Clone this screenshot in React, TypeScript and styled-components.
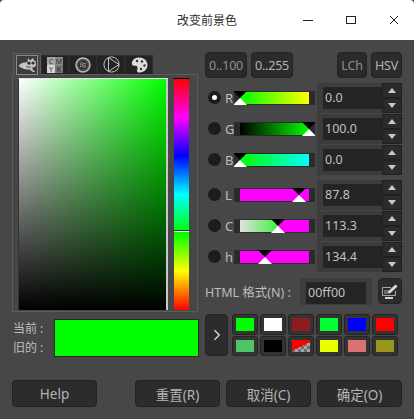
import styled, { createGlobalStyle } from "styled-components";
import { ChevronRight } from "lucide-react";

const Global = createGlobalStyle`
    html, body {
        margin: 0;
        background: #3a3a3a;
    }
`

const Dialog = styled("div")`
    width: 414px;
    height: 419px;
    display: flex;
    flex-direction: column;
    overflow: hidden;
    border-radius: 4px 4px 2px 2px;
    background: #474747;
    color: #bdbdbd;
    font-family: "Noto Sans", "Noto Sans CJK SC", sans-serif;
    font-size: 13px;
`

const TitleBar = styled("div")`
    height: 40px;
    flex: none;
    background: #ffffff;
    color: #2e2e2e;
    position: relative;
    display: flex;
    align-items: center;
    justify-content: center;
    font-size: 12px;
`

const WindowButtons = styled("div")`
    position: absolute;
    top: 0;
    right: 13px;
    height: 40px;
    display: flex;
    align-items: center;
    gap: 29px;
    color: #222;
`

const Main = styled("div")`
    display: grid;
    grid-template-columns: 187px 197px;
    column-gap: 6px;
    padding: 12px 12px 0;
`

const LeftColumn = styled("div")`
    display: flex;
    flex-direction: column;
`

const Tabs = styled("div")`
    display: flex;
    height: 22px;
    padding-left: 1px;
    align-items: flex-end;
`

const Tab = styled("div")<{ $active?: boolean }>`
    width: 28px;
    height: ${p => (p.$active ? "22px" : "19px")};
    box-sizing: border-box;
    display: flex;
    align-items: center;
    justify-content: center;
    background: ${p => (p.$active ? "#474747" : "#232323")};
    border: 1px solid ${p => (p.$active ? "#5c5c5c" : "#2c2c2c")};
    border-bottom: ${p => (p.$active ? "none" : "1px solid #232323")};
    margin-bottom: ${p => (p.$active ? "-1px" : "0")};
    position: relative;
`

const ActiveMark = styled("div")`
    width: 20px;
    height: 18px;
    display: flex;
    align-items: center;
    justify-content: center;
    background: #3c3c3c;
    border: 1px solid #8a8a8a;
`

const Frame = styled("div")`
    width: 186px;
    height: 238px;
    box-sizing: border-box;
    border: 1px solid #5c5c5c;
    padding: 3px 8px 0 5px;
    display: flex;
    justify-content: space-between;
`

const ColorSquare = styled("div")`
    width: 150px;
    height: 232px;
    box-sizing: border-box;
    background:
        linear-gradient(180deg, rgba(0, 0, 0, 0), #000),
        linear-gradient(90deg, #fff, #0f0);
    border-top: 1px solid #e4e4e4;
    border-right: 2px solid #c8c8c8;
    border-left: 1px solid #333;
`

const HueStrip = styled("div")`
    width: 15px;
    height: 232px;
    box-sizing: border-box;
    border-top: 1px solid #000;
    position: relative;
    background: linear-gradient(180deg, #f00, #f0f 16.6%, #00f 33.3%, #0ff 50%, #0f0 66.6%, #ff0 83.3%, #f00);
`

const HueMarker = styled("div")`
    position: absolute;
    left: 0;
    right: 0;
    top: 151px;
    height: 1px;
    background: #d8e8d8;
    border-top: 1px solid #333;
`

const Compare = styled("div")`
    display: grid;
    grid-template-columns: 42px 145px;
    margin-top: 7px;
    height: 38px;
`

const CompareLabels = styled("div")`
    display: flex;
    flex-direction: column;
    justify-content: space-between;
    padding-left: 1px;
    line-height: 19px;
    font-size: 12px;
`

const CompareSwatch = styled("div")`
    box-sizing: border-box;
    background: #00ff00;
    border: 1px solid #2a2a2a;
`

const RightColumn = styled("div")`
    display: flex;
    flex-direction: column;
`

const ModeRow = styled("div")`
    display: flex;
    height: 26px;
    gap: 4px;
`

const Spacer = styled("div")`
    flex: 1;
`

const ModeButton = styled("div")<{ $w: number; $dim?: boolean }>`
    width: ${p => p.$w}px;
    box-sizing: border-box;
    display: flex;
    align-items: center;
    justify-content: center;
    border-radius: 4px;
    background: ${p => (p.$dim ? "#2a2a2a" : "#2c2c2c")};
    border: 1px solid #232323;
    color: ${p => (p.$dim ? "#8f8f8f" : "#b4b4b4")};
    font-size: 12.5px;
    letter-spacing: -0.2px;
`

const Rows = styled("div")<{ $top: number }>`
    display: flex;
    flex-direction: column;
    gap: 1px;
    margin-top: ${p => p.$top}px;
`

const Row = styled("div")`
    display: flex;
    height: 30px;
    align-items: center;
`

const Radio = styled("div")<{ $on?: boolean }>`
    width: 13px;
    height: 13px;
    margin: 0 0 2px 3px;
    flex: none;
    border-radius: 50%;
    background: #1c1c1c;
    display: flex;
    align-items: center;
    justify-content: center;
    &::after {
        content: "";
        display: ${p => (p.$on ? "block" : "none")};
        width: 5px;
        height: 5px;
        border-radius: 50%;
        background: #fff;
    }
`

const RowLabel = styled("div")`
    width: 13px;
    padding-left: 4px;
    box-sizing: border-box;
    flex: none;
    font-size: 13px;
    white-space: nowrap;
`

const Track = styled("div")`
    width: 81px;
    height: 14px;
    flex: none;
    padding: 1px 6px;
    box-sizing: border-box;
    background: #2b2b2b;
    position: relative;
    overflow: hidden;
`

const Fill = styled("div")<{ $fill: string }>`
    height: 12px;
    background: ${p => p.$fill};
`

const ThumbTop = styled("div")`
    position: absolute;
    top: 0;
    width: 0;
    height: 0;
    margin-left: -7px;
    border-left: 7px solid transparent;
    border-right: 7px solid transparent;
    border-top: 7px solid #000;
`

const ThumbBottom = styled("div")`
    position: absolute;
    bottom: 0;
    width: 0;
    height: 0;
    margin-left: -7px;
    border-left: 7px solid transparent;
    border-right: 7px solid transparent;
    border-bottom: 7px solid #fff;
`

const SpinFrame = styled("div")`
    width: 85px;
    height: 30px;
    margin-left: 2px;
    flex: none;
    display: flex;
    background: #3c3c3c;
    padding-left: 6px;
    box-sizing: border-box;
    align-items: center;
`

const SpinEntry = styled("div")`
    width: 59px;
    height: 22px;
    box-sizing: border-box;
    background: #242424;
    padding-left: 2px;
    line-height: 22px;
    font-size: 12.5px;
    color: #c0c0c0;
`

const SpinButtons = styled("div")`
    width: 20px;
    height: 30px;
    display: flex;
    flex-direction: column;
`

const SpinButton = styled("div")<{ $up?: boolean }>`
    height: 15px;
    box-sizing: border-box;
    background: #2b2b2b;
    border: 1px solid #1f1f1f;
    display: flex;
    align-items: center;
    justify-content: center;
    &::after {
        content: "";
        width: 0;
        height: 0;
        border-left: 4px solid transparent;
        border-right: 4px solid transparent;
        ${p => (p.$up ? "border-bottom: 5px solid #c8c8c8;" : "border-top: 5px solid #c8c8c8;")}
    }
`

const HtmlRow = styled("div")`
    display: flex;
    height: 26px;
    margin-top: 6px;
    align-items: center;
`

const HtmlLabel = styled("div")`
    width: 95px;
    font-size: 12.5px;
    white-space: nowrap;
`

const HtmlFrame = styled("div")`
    width: 72px;
    height: 27px;
    box-sizing: border-box;
    background: #3c3c3c;
    padding: 4px 6px 0;
`

const HtmlEntry = styled("div")`
    height: 22px;
    background: #242424;
    padding-left: 2px;
    line-height: 22px;
    font-size: 12.5px;
    color: #c0c0c0;
`

const PickButton = styled("div")`
    width: 24px;
    height: 26px;
    margin-left: 6px;
    box-sizing: border-box;
    border: 1px solid #232323;
    border-radius: 4px;
    background: #2c2c2c;
    display: flex;
    align-items: center;
    justify-content: center;
`

const PaletteRow = styled("div")`
    display: flex;
    margin-top: 10px;
    gap: 4px;
    height: 42px;
`

const ArrowButton = styled("div")`
    width: 23px;
    box-sizing: border-box;
    background: #2c2c2c;
    border: 1px solid #232323;
    border-radius: 4px;
    color: #e0e0e0;
    display: flex;
    align-items: center;
    justify-content: center;
`

const SwatchGrid = styled("div")`
    display: grid;
    grid-template-columns: repeat(6, 26px);
    grid-template-rows: 21px 20px;
    column-gap: 2px;
    row-gap: 1px;
    width: 170px;
`

const Swatch = styled("div")`
    box-sizing: border-box;
    background: #333;
    border: 1px solid #242424;
    border-radius: 3px;
    padding: 3px;
    display: flex;
`

const SwatchFill = styled("div")<{ $fill: string }>`
    flex: 1;
    background: ${p => p.$fill};
`

const Footer = styled("div")`
    display: flex;
    margin-top: auto;
    margin-bottom: 12px;
    padding: 0 12px;
    gap: 6px;
`

const FooterButton = styled("div")<{ $gapRight?: boolean }>`
    width: 85px;
    height: 27px;
    box-sizing: border-box;
    border: 1px solid #222;
    border-radius: 4px;
    background: #2c2c2c;
    display: flex;
    align-items: center;
    justify-content: center;
    font-size: 13.5px;
    color: #b4b4b4;
    margin-right: ${p => (p.$gapRight ? "32px" : "0")};
`

const MinimizeIcon = () => (
    <svg width="14" height="14" viewBox="0 0 14 14" fill="none" stroke="currentColor">
        <path d="M2 7.5 H12" />
    </svg>
)

const MaximizeIcon = () => (
    <svg width="14" height="14" viewBox="0 0 14 14" fill="none" stroke="currentColor">
        <rect x="2.5" y="3.5" width="9" height="7" />
    </svg>
)

const CloseIcon = () => (
    <svg width="14" height="14" viewBox="0 0 14 14" fill="none" stroke="currentColor">
        <path d="M3 3 L11 11 M11 3 L3 11" />
    </svg>
)

const Wilber = () => (
    <svg width="19" height="16" viewBox="0 0 19 16">
        <path d="M0.5 9 C2 6.5 4.5 5.5 7 5.5 L9.5 5 L10 1 L12 3.5 L15 1 L16 3.5 L17.5 4 L18 8 C17.5 10 15.5 10.5 14 10.5 L15 13 L17.5 15 L15 15 L11.5 12.5 C8 12.5 4 12 0.5 9 Z" fill="#c4c4c4" />
        <circle cx="11" cy="6.2" r="1.6" fill="#2e2e2e" />
        <circle cx="15" cy="6" r="1.6" fill="#2e2e2e" />
        <path d="M8 9.5 L13 10.5" stroke="#555" strokeWidth="1" />
    </svg>
)

const Cmyk = () => (
    <svg width="16" height="16" viewBox="0 0 16 16" fontFamily="Noto Sans" fontSize="7" textAnchor="middle">
        <rect width="8" height="8" fill="#a6a6a6" />
        <rect x="8" width="8" height="8" fill="#8a8a8a" />
        <rect y="8" width="8" height="8" fill="#d4d4d4" />
        <rect x="8" y="8" width="8" height="8" fill="#777" />
        <text x="4" y="6.5" fill="#333">C</text>
        <text x="12" y="6.5" fill="#333">M</text>
        <text x="4" y="14.5" fill="#333">Y</text>
        <text x="12" y="14.5" fill="#222">K</text>
    </svg>
)

const WaterIcon = () => (
    <svg width="16" height="16" viewBox="0 0 16 16" fill="none">
        <circle cx="8" cy="8" r="7" fill="#555" stroke="#bcbcbc" strokeWidth="1.4" />
        <circle cx="8" cy="8" r="4.6" fill="#2a2a2a" />
        <path d="M5 6.2 q1.5 -1 3 0 t3 0 M5 8 q1.5 -1 3 0 t3 0 M5 9.8 q1.5 -1 3 0 t3 0" stroke="#bbb" strokeWidth="0.8" />
    </svg>
)

const TriangleIcon = () => (
    <svg width="17" height="17" viewBox="0 0 17 17" fill="none" stroke="#c4c4c4" strokeWidth="1">
        <circle cx="8.5" cy="8.5" r="7.6" />
        <path d="M5.5 1.6 L5.5 15.4 L16 8.5 Z" />
    </svg>
)

const PaletteIcon = () => (
    <svg width="17" height="16" viewBox="0 0 17 16">
        <path d="M7 0.5 C12 0 16.5 3 16.5 8 C16.5 13 12 15.5 8 15.5 C5.5 15.5 6 13 6.5 11.5 C7 9.5 5.5 8.5 3.5 8.8 C1 9 0.5 7 1 5 C1.8 2.5 4 0.8 7 0.5 Z" fill="#dcdcdc" />
        <circle cx="6" cy="4" r="1.2" fill="#333" />
        <circle cx="11" cy="4.5" r="1.2" fill="#333" />
        <circle cx="13.5" cy="8.5" r="1.2" fill="#333" />
        <circle cx="10" cy="12" r="1.2" fill="#333" />
    </svg>
)

const PickerIcon = () => (
    <svg width="18" height="16" viewBox="0 0 18 16" fill="none">
        <path d="M10 4.5 H1.5 V12.5 H14.5 V8" stroke="#a8a8a8" strokeWidth="1" />
        <rect x="3" y="7" width="6" height="4" fill="#6a6a6a" />
        <path d="M4 15 H12" stroke="#d0d0d0" strokeWidth="2" />
        <path d="M7 10 L7.5 8 L14.5 1.5 L16.5 3.5 L9.5 10 Z" fill="#dcdcdc" />
    </svg>
)

const rgbRows = [
    { name: "R", value: "0.0", at: 6, fill: "linear-gradient(90deg, #0f0, #ff0)", on: true },
    { name: "G", value: "100.0", at: 75, fill: "linear-gradient(90deg, #000, #0f0)" },
    { name: "B", value: "0.0", at: 6, fill: "linear-gradient(90deg, #0f0, #0ff)" },
]

const lchRows = [
    { name: "L", value: "87.8", at: 65, fill: "#f0f" },
    { name: "C", value: "113.3", at: 44, fill: "linear-gradient(90deg, #e2e2e2, #3cf03c 56%, #f0f 56%)" },
    { name: "h", value: "134.4", at: 31, fill: "#f0f" },
]

const palette = [
    "#00ff00", "#ffffff", "#8e1c1c", "#00ff33", "#0000ff", "#ff0000",
    "#50c468", "#000000",
    "linear-gradient(153deg, #ff0000 52%, transparent 52%), repeating-conic-gradient(#6e6e6e 0 25%, #a4a4a4 0 50%) 0 0 / 6px 6px",
    "#eaff00", "#d87272", "#99961e",
]

type ChannelProps = { name: string; value: string; at: number; fill: string; on?: boolean }

const Channel = ({ name, value, at, fill, on }: ChannelProps) => (
    <Row>
        <Radio $on={on} />
        <RowLabel>{name}</RowLabel>
        <Track>
            <Fill $fill={fill} />
            <ThumbTop style={{ left: at }} />
            <ThumbBottom style={{ left: at }} />
        </Track>
        <SpinFrame>
            <SpinEntry>{value}</SpinEntry>
            <SpinButtons>
                <SpinButton $up />
                <SpinButton />
            </SpinButtons>
        </SpinFrame>
    </Row>
)

const App = () => {
    return (
        <Dialog>
            <Global />
            <TitleBar>
                改变前景色
                <WindowButtons>
                    <MinimizeIcon />
                    <MaximizeIcon />
                    <CloseIcon />
                </WindowButtons>
            </TitleBar>
            <Main>
                <LeftColumn>
                    <Tabs>
                        <Tab $active><ActiveMark><Wilber /></ActiveMark></Tab>
                        <Tab><Cmyk /></Tab>
                        <Tab><WaterIcon /></Tab>
                        <Tab><TriangleIcon /></Tab>
                        <Tab><PaletteIcon /></Tab>
                    </Tabs>
                    <Frame>
                        <ColorSquare />
                        <HueStrip><HueMarker /></HueStrip>
                    </Frame>
                    <Compare>
                        <CompareLabels>
                            <div>当前 :</div>
                            <div>旧的 :</div>
                        </CompareLabels>
                        <CompareSwatch />
                    </Compare>
                </LeftColumn>
                <RightColumn>
                    <ModeRow>
                        <ModeButton $w={42} $dim>0..100</ModeButton>
                        <ModeButton $w={42}>0..255</ModeButton>
                        <Spacer />
                        <ModeButton $w={30} $dim>LCh</ModeButton>
                        <ModeButton $w={31}>HSV</ModeButton>
                    </ModeRow>
                    <Rows $top={5}>
                        {rgbRows.map(r => <Channel key={r.name} {...r} />)}
                    </Rows>
                    <Rows $top={5}>
                        {lchRows.map(r => <Channel key={r.name} {...r} />)}
                    </Rows>
                    <HtmlRow>
                        <HtmlLabel>HTML 格式(N) :</HtmlLabel>
                        <HtmlFrame><HtmlEntry>00ff00</HtmlEntry></HtmlFrame>
                        <PickButton><PickerIcon /></PickButton>
                    </HtmlRow>
                    <PaletteRow>
                        <ArrowButton><ChevronRight size={18} strokeWidth={1.6} /></ArrowButton>
                        <SwatchGrid>
                            {palette.map((c, i) => (
                                <Swatch key={i}><SwatchFill $fill={c} /></Swatch>
                            ))}
                        </SwatchGrid>
                    </PaletteRow>
                </RightColumn>
            </Main>
            <Footer>
                <FooterButton $gapRight>Help</FooterButton>
                <FooterButton>重置(R)</FooterButton>
                <FooterButton>取消(C)</FooterButton>
                <FooterButton>确定(O)</FooterButton>
            </Footer>
        </Dialog>
    )
}

export default App;
